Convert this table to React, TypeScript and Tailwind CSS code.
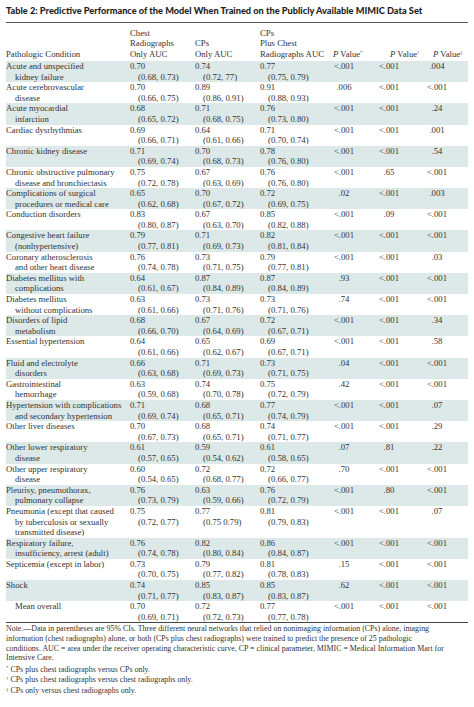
import React from "react"

type Row = {
  label: string[]
  cxr: [string, string]
  cps: [string, string]
  both: [string, string]
  p: [string, string, string]
  indent?: boolean
}

const rows: Row[] = [
  { label: ["Acute and unspecified", "kidney failure"], cxr: ["0.70", "(0.68, 0.73)"], cps: ["0.74", "(0.72, 77)"], both: ["0.77", "(0.75, 0.79)"], p: ["<.001", "<.001", ".004"] },
  { label: ["Acute cerebrovascular", "disease"], cxr: ["0.70", "(0.66, 0.75)"], cps: ["0.89", "(0.86, 0.91)"], both: ["0.91", "(0.88, 0.93)"], p: [".006", "<.001", "<.001"] },
  { label: ["Acute myocardial", "infarction"], cxr: ["0.68", "(0.65, 0.72)"], cps: ["0.71", "(0.68, 0.75)"], both: ["0.76", "(0.73, 0.80)"], p: ["<.001", "<.001", ".24"] },
  { label: ["Cardiac dysrhythmias"], cxr: ["0.69", "(0.66, 0.71)"], cps: ["0.64", "(0.61, 0.66)"], both: ["0.71", "(0.70, 0.74)"], p: ["<.001", "<.001", ".001"] },
  { label: ["Chronic kidney disease"], cxr: ["0.71", "(0.69, 0.74)"], cps: ["0.70", "(0.68, 0.73)"], both: ["0.78", "(0.76, 0.80)"], p: ["<.001", "<.001", ".54"] },
  { label: ["Chronic obstructive pulmonary", "disease and bronchiectasis"], cxr: ["0.75", "(0.72, 0.78)"], cps: ["0.67", "(0.63, 0.69)"], both: ["0.76", "(0.76, 0.80)"], p: ["<.001", ".65", "<.001"] },
  { label: ["Complications of surgical", "procedures or medical care"], cxr: ["0.65", "(0.62, 0.68)"], cps: ["0.70", "(0.67, 0.72)"], both: ["0.72", "(0.69, 0.75)"], p: [".02", "<.001", ".003"] },
  { label: ["Conduction disorders"], cxr: ["0.83", "(0.80, 0.87)"], cps: ["0.67", "(0.63, 0.70)"], both: ["0.85", "(0.82, 0.88)"], p: ["<.001", ".09", "<.001"] },
  { label: ["Congestive heart failure", "(nonhypertensive)"], cxr: ["0.79", "(0.77, 0.81)"], cps: ["0.71", "(0.69, 0.73)"], both: ["0.82", "(0.81, 0.84)"], p: ["<.001", "<.001", "<.001"] },
  { label: ["Coronary atherosclerosis", "and other heart disease"], cxr: ["0.76", "(0.74, 0.78)"], cps: ["0.73", "(0.71, 0.75)"], both: ["0.79", "(0.77, 0.81)"], p: ["<.001", "<.001", ".03"] },
  { label: ["Diabetes mellitus with", "complications"], cxr: ["0.64", "(0.61, 0.67)"], cps: ["0.87", "(0.84, 0.89)"], both: ["0.87", "(0.84, 0.89)"], p: [".93", "<.001", "<.001"] },
  { label: ["Diabetes mellitus", "without complications"], cxr: ["0.63", "(0.61, 0.66)"], cps: ["0.73", "(0.71, 0.76)"], both: ["0.73", "(0.71, 0.76)"], p: [".74", "<.001", "<.001"] },
  { label: ["Disorders of lipid", "metabolism"], cxr: ["0.68", "(0.66, 0.70)"], cps: ["0.67", "(0.64, 0.69)"], both: ["0.72", "(0.67, 0.71)"], p: ["<.001", "<.001", ".34"] },
  { label: ["Essential hypertension"], cxr: ["0.64", "(0.61, 0.66)"], cps: ["0.65", "(0.62, 0.67)"], both: ["0.69", "(0.67, 0.71)"], p: ["<.001", "<.001", ".58"] },
  { label: ["Fluid and electrolyte", "disorders"], cxr: ["0.66", "(0.63, 0.68)"], cps: ["0.71", "(0.69, 0.73)"], both: ["0.73", "(0.71, 0.75)"], p: [".04", "<.001", "<.001"] },
  { label: ["Gastrointestinal", "hemorrhage"], cxr: ["0.63", "(0.59, 0.68)"], cps: ["0.74", "(0.70, 0.78)"], both: ["0.75", "(0.72, 0.79)"], p: [".42", "<.001", "<.001"] },
  { label: ["Hypertension with complications", "and secondary hypertension"], cxr: ["0.71", "(0.69, 0.74)"], cps: ["0.68", "(0.65, 0.71)"], both: ["0.77", "(0.74, 0.79)"], p: ["<.001", "<.001", ".07"] },
  { label: ["Other liver diseases"], cxr: ["0.70", "(0.67, 0.73)"], cps: ["0.68", "(0.65, 0.71)"], both: ["0.74", "(0.71, 0.77)"], p: ["<.001", "<.001", ".29"] },
  { label: ["Other lower respiratory", "disease"], cxr: ["0.61", "(0.57, 0.65)"], cps: ["0.59", "(0.54, 0.62)"], both: ["0.61", "(0.58, 0.65)"], p: [".07", ".81", ".22"] },
  { label: ["Other upper respiratory", "disease"], cxr: ["0.60", "(0.54, 0.65)"], cps: ["0.72", "(0.68, 0.77)"], both: ["0.72", "(0.66, 0.77)"], p: [".70", "<.001", "<.001"] },
  { label: ["Pleurisy, pneumothorax,", "pulmonary collapse"], cxr: ["0.76", "(0.73, 0.79)"], cps: ["0.63", "(0.59, 0.66)"], both: ["0.76", "(0.72, 0.79)"], p: ["<.001", ".80", "<.001"] },
  { label: ["Pneumonia (except that caused", "by tuberculosis or sexually", "transmitted disease)"], cxr: ["0.75", "(0.72, 0.77)"], cps: ["0.77", "(0.75 0.79)"], both: ["0.81", "(0.79, 0.83)"], p: ["<.001", "<.001", ".07"] },
  { label: ["Respiratory failure,", "insufficiency, arrest (adult)"], cxr: ["0.76", "(0.74, 0.78)"], cps: ["0.82", "(0.80, 0.84)"], both: ["0.86", "(0.84, 0.87)"], p: ["<.001", "<.001", "<.001"] },
  { label: ["Septicemia (except in labor)"], cxr: ["0.73", "(0.70, 0.75)"], cps: ["0.79", "(0.77, 0.82)"], both: ["0.81", "(0.78, 0.83)"], p: [".15", "<.001", "<.001"] },
  { label: ["Shock"], cxr: ["0.74", "(0.71, 0.77)"], cps: ["0.85", "(0.83, 0.87)"], both: ["0.85", "(0.83, 0.87)"], p: [".62", "<.001", "<.001"] },
  { label: ["Mean overall"], cxr: ["0.70", "(0.69, 0.71)"], cps: ["0.72", "(0.72, 0.73)"], both: ["0.77", "(0.77, 0.78)"], p: ["<.001", "<.001", "<.001"], indent: true },
]

const grid = "grid grid-cols-[124px_65px_65px_66px_36px_54px_42px_10px]"

function Auc({ v }: { v: [string, string] }) {
  return (
    <div>
      <div>{v[0]}</div>
      <div className="pl-[8px] whitespace-nowrap">{v[1]}</div>
    </div>
  )
}

function PHead({ mark, pad }: { mark: string; pad: string }) {
  return (
    <div className={`${pad} whitespace-nowrap`}>
      <span className="italic">P</span> Value<sup className="text-[5px]">{mark}</sup>
    </div>
  )
}

export default function App() {
  return (
    <div
      className="w-[474px] h-[707px] bg-white px-[6px] pt-[5px] text-[#333]"
      style={{ fontFamily: '"Liberation Serif", "Times New Roman", serif' }}
    >
      <h1
        className="text-[9.2px] leading-[11px] font-black text-[#1e1e1e] whitespace-nowrap"
        style={{ fontFamily: 'Lato, "Liberation Sans", sans-serif' }}
      >
        Table 2: Predictive Performance of the Model When Trained on the Publicly Available MIMIC Data Set
      </h1>

      <div className="mt-[6px] border-t border-[#555] text-[8.7px] leading-[10.6px]">
        <div className={`${grid} items-end pt-[4.7px] pb-[1.5px]`}>
          <div>Pathologic Condition</div>
          <div>
            <div>Chest</div>
            <div>Radiographs</div>
            <div>Only AUC</div>
          </div>
          <div>
            <div>CPs</div>
            <div>Only AUC</div>
          </div>
          <div className="whitespace-nowrap">
            <div>CPs</div>
            <div>Plus Chest</div>
            <div>Radiographs AUC</div>
          </div>
          <PHead mark="*" pad="pl-[7px]" />
          <PHead mark="†" pad="pl-[28px]" />
          <PHead mark="‡" pad="pl-[17px]" />
          <div />
        </div>

        {rows.map((r, i) => (
          <div key={i} className={`${grid} ${i % 2 === 0 ? "bg-[#dde9e9]" : ""}`}>
            <div className={r.indent ? "pl-[9px]" : ""}>
              {r.label.map((l, j) => (
                <div key={j} className={`whitespace-nowrap ${j > 0 ? "pl-[9px]" : ""}`}>
                  {l}
                </div>
              ))}
            </div>
            <Auc v={r.cxr} />
            <Auc v={r.cps} />
            <Auc v={r.both} />
            {r.p.map((p, j) => (
              <div key={j} className="text-center">
                {p}
              </div>
            ))}
            <div />
          </div>
        ))}
      </div>

      <div className="border-t-[1.5px] border-[#444] pt-[1px] text-[7.9px] leading-[9.6px]">
        <p className="whitespace-nowrap">
          Note.—Data in parentheses are 95% CIs. Three different neural networks that relied on nonimaging information (CPs) alone, imaging
          <br />
          information (chest radiographs) alone, or both (CPs plus chest radiographs) were trained to predict the presence of 25 pathologic
          <br />
          conditions. AUC = area under the receiver operating characteristic curve, CP = clinical parameter, MIMIC = Medical Information Mart for
          <br />
          Intensive Care.
        </p>
        <div className="mt-[2px] leading-[10.6px]">
          <p><sup className="text-[5px]">*</sup> CPs plus chest radiographs versus CPs only.</p>
          <p><sup className="text-[5px]">†</sup> CPs plus chest radiographs versus chest radiographs only.</p>
          <p><sup className="text-[5px]">‡</sup> CPs only versus chest radiographs only.</p>
        </div>
      </div>
    </div>
  )
}
